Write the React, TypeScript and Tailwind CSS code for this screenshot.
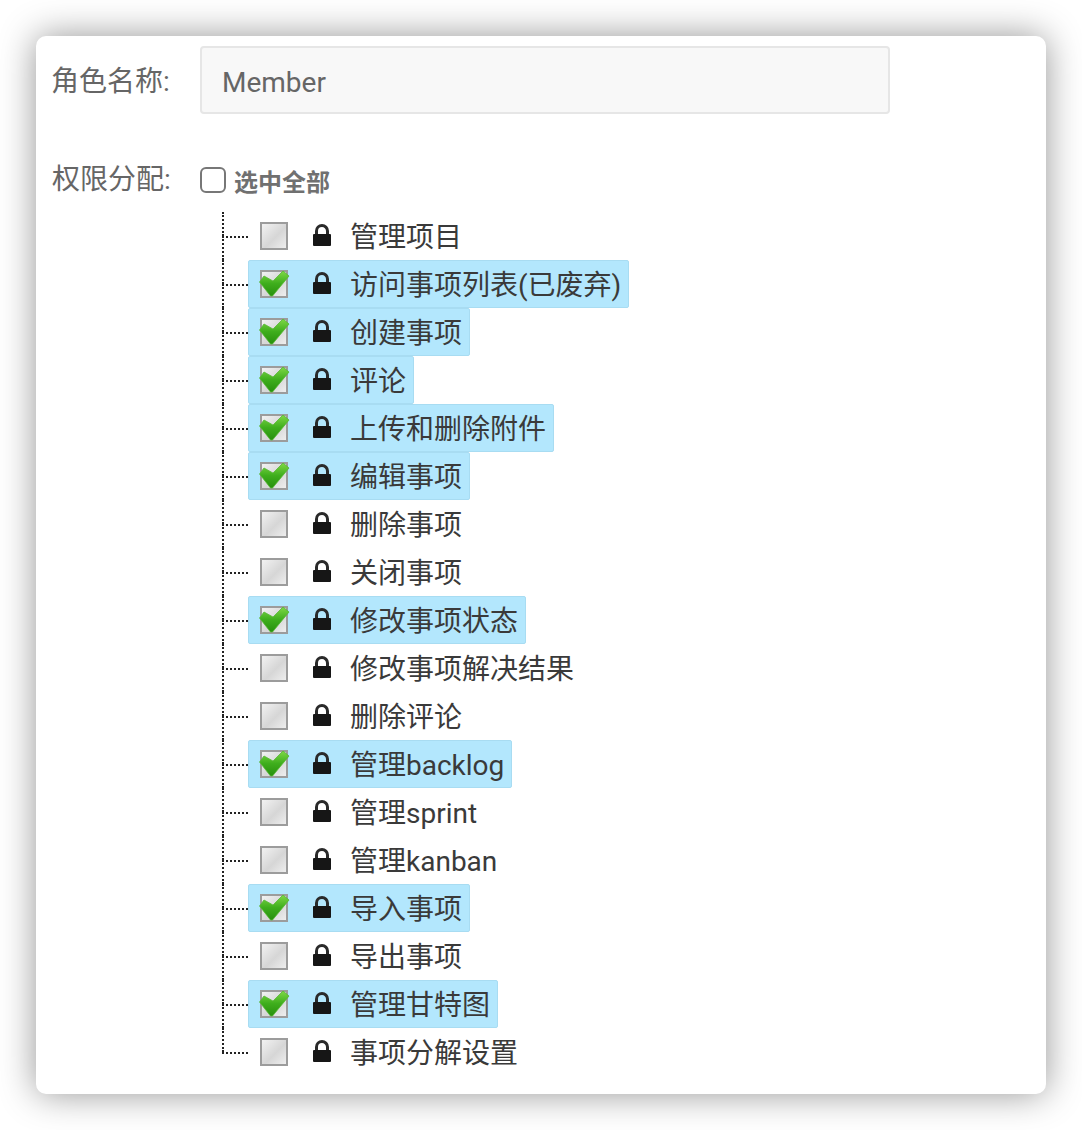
import React from "react";

const font = "font-['Roboto','Noto_Sans_CJK_SC',sans-serif]";

const rows: [string, boolean][] = [
  ["管理项目", false],
  ["访问事项列表(已废弃)", true],
  ["创建事项", true],
  ["评论", true],
  ["上传和删除附件", true],
  ["编辑事项", true],
  ["删除事项", false],
  ["关闭事项", false],
  ["修改事项状态", true],
  ["修改事项解决结果", false],
  ["删除评论", false],
  ["管理backlog", true],
  ["管理sprint", false],
  ["管理kanban", false],
  ["导入事项", true],
  ["导出事项", false],
  ["管理甘特图", true],
  ["事项分解设置", false],
];

function TreeBox({ on, id }: { on: boolean; id: number }) {
  return (
    <svg width="32" height="30" viewBox="0 0 32 30" className="shrink-0 -ml-0.5">
      <defs>
        <linearGradient id={`b${id}`} x1="0" y1="0" x2="1" y2="1">
          <stop offset="0" stopColor="#f4f4f4" />
          <stop offset="0.55" stopColor="#d6d6d6" />
          <stop offset="1" stopColor="#f0f0f0" />
        </linearGradient>
        <linearGradient id={`g${id}`} x1="0" y1="0" x2="0" y2="1">
          <stop offset="0" stopColor="#7fd846" />
          <stop offset="0.5" stopColor="#3fae1d" />
          <stop offset="1" stopColor="#27900d" />
        </linearGradient>
      </defs>
      <rect x="3" y="2" width="26" height="26" fill={`url(#b${id})`} stroke="#9c9c9c" strokeWidth="2" />
      {on && (
        <path
          d="M1.5 13 L6 7 L15 12 L25 2 L31 7 L14.5 27 L12.5 27 Z"
          fill={`url(#g${id})`}
          stroke="#55b832"
          strokeWidth="0.8"
          strokeLinejoin="round"
        />
      )}
    </svg>
  );
}

function Lock() {
  return (
    <svg width="20" height="22" viewBox="0 0 20 22" className="shrink-0 ml-[22px] mr-[18px] -mt-[2px]">
      <path d="M4.5 11V7a5.5 5.5 0 0 1 11 0V11" fill="none" stroke="#2a2a2a" strokeWidth="3" />
      <rect x="1" y="10" width="18" height="12" rx="1" fill="#161616" />
    </svg>
  );
}

function Row({ label, on, last, id }: { label: string; on: boolean; last: boolean; id: number }) {
  return (
    <div className="flex h-12 ml-[22px]">
      <div className="w-[26px] shrink-0 flex flex-col">
        <div className="h-6 border-l-2 border-dotted border-[#222]" />
        <div
          className={
            last
              ? "h-6 pl-0.5 border-t-2 border-dotted border-[#222]"
              : "h-6 border-l-2 border-t-2 border-dotted border-[#222]"
          }
        />
      </div>
      <div
        className={
          on
            ? "flex items-center h-12 pl-[11px] pr-[7px] bg-[#b3e7fd] border border-[#a8dcf2] rounded-[2px]"
            : "flex items-center h-12 pl-3 pr-2"
        }
      >
        <TreeBox on={on} id={id} />
        <Lock />
        <span className="pt-1 text-[28px] leading-none text-[#3a3a3a] whitespace-nowrap">{label}</span>
      </div>
    </div>
  );
}

export default function App() {
  return (
    <div className={`w-[1082px] h-[1130px] bg-white p-9 ${font}`}>
      <div className="w-[1010px] h-[1058px] bg-white rounded-[10px] shadow-[0_0_36px_rgba(0,0,0,0.42)] pt-[10px] pl-4">
        <div className="flex">
          <div className="w-[148px] shrink-0 pt-[18px] -ml-px mr-px text-[28px] leading-[36px] text-[#666]">角色名称:</div>
          <div className="w-[690px] h-[68px] flex items-center pl-5 pt-1.5 bg-[#f8f8f8] border-2 border-[#e6e6e6] rounded-[4px] text-[28px] text-[#666]">
            Member
          </div>
        </div>
        <div className="flex mt-[53px]">
          <div className="w-[148px] shrink-0 -mt-[5px] text-[28px] leading-[36px] text-[#666]">权限分配:</div>
          <div className="flex-1">
            <div className="flex items-start h-[45px]">
              <div className="w-[26px] h-[26px] border-2 border-[#777] rounded-[6px] bg-white" />
              <span className="ml-2 text-2xl leading-[32px] font-bold text-[#707070]">选中全部</span>
            </div>
            {rows.map(([label, on], i) => (
              <Row key={label} label={label} on={on} last={i === rows.length - 1} id={i} />
            ))}
          </div>
        </div>
      </div>
    </div>
  );
}
